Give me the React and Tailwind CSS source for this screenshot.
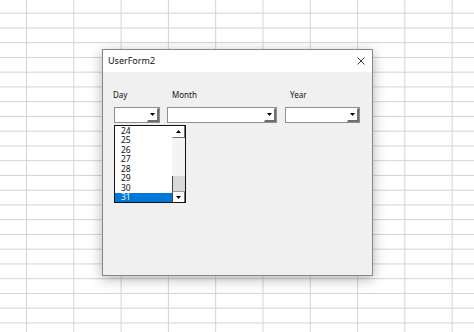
import React from 'react'

const days = [24, 25, 26, 27, 28, 29, 30, 31]

const Tri = ({ up }) => (
  <svg width="5" height="3" viewBox="0 0 5 3" className="block">
    {up ? <path d="M0 3 L2.5 0 L5 3 Z" fill="#000" /> : <path d="M0 0 L5 0 L2.5 3 Z" fill="#000" />}
  </svg>
)

const ComboBox = ({ className, children }) => (
  <div className={`relative h-[16px] flex bg-white border border-[#8f8f8f] ${className}`}>
    <div className="flex-1" />
    <div className="w-[12px] h-full flex items-center justify-center bg-white border-l border-t border-white border-r-[2px] border-b-[2px] border-r-[#6e6e6e] border-b-[#6e6e6e]">
      <Tri />
    </div>
    {children}
  </div>
)

const DayList = () => (
  <div className="absolute left-[-1px] top-[17px] w-[72px] h-[78px] flex bg-white border border-[#111] z-10">
    {/* items */}
    <div className="flex-1 flex flex-col overflow-hidden">
      {days.map((d) => (
        <div
          key={d}
          className={`h-[9.5px] shrink-0 flex items-center pl-[6px] text-[8.5px] leading-none ${
            d === 31 ? 'bg-[#0078d7] text-[#eaf3ff]' : 'text-[#111]'
          }`}
        >
          {d}
        </div>
      ))}
    </div>
    {/* scrollbar */}
    <div className="w-[13px] flex flex-col bg-[#f4f4f4]">
      <div className="h-[12px] flex items-center justify-center bg-white border-r border-b border-[#6e6e6e] border-l border-l-white">
        <Tri up />
      </div>
      <div className="flex-1 flex flex-col justify-end">
        <div className="h-[16px] bg-[#d9d9d9] border-l border-[#444] border-b border-b-[#9a9a9a]" />
      </div>
      <div className="h-[10px] flex items-center justify-center bg-white border-l border-[#444] border-r border-r-[#6e6e6e]">
        <Tri />
      </div>
    </div>
  </div>
)

export default function App() {
  return (
    <div
      className="w-[474px] h-[332px] overflow-hidden bg-white bg-[linear-gradient(to_right,#d3d3d3_1px,transparent_1px),linear-gradient(to_bottom,#d3d3d3_1px,transparent_1px)] bg-size-[47.3px_14.75px] bg-position-[26px_12.7px] pt-[49px] pl-[102px]"
      style={{ fontFamily: '"Noto Sans", "Open Sans", sans-serif' }}
    >
      <div className="w-[271px] h-[227px] flex flex-col border border-[#878787] shadow-[0_3px_12px_rgba(0,0,0,0.3)]">
        {/* title bar */}
        <div className="h-[22px] flex items-center justify-between bg-white pl-[5px] pr-[7px]">
          <span className="text-[9px] text-[#111]">UserForm2</span>
          <svg width="8" height="8" viewBox="0 0 8 8" className="block">
            <path d="M0.5 0.5 L7.5 7.5 M7.5 0.5 L0.5 7.5" stroke="#222" strokeWidth="0.9" />
          </svg>
        </div>

        {/* body */}
        <div className="flex-1 bg-[#f0f0f0] pt-[17px] pl-[10px]">
          <div className="flex items-start gap-[7px]">
            <div className="flex flex-col">
              <span className="h-[12px] leading-[12px] text-[8px] text-[#111]">Day</span>
              <ComboBox className="mt-[6px] ml-[1px] w-[46px]">
                <DayList />
              </ComboBox>
            </div>
            <div className="flex flex-col">
              <span className="h-[12px] leading-[12px] text-[8px] text-[#111] pl-[5px]">Month</span>
              <ComboBox className="mt-[6px] w-[110px]" />
            </div>
            <div className="flex flex-col ml-[1px]">
              <span className="h-[12px] leading-[12px] text-[8px] text-[#111] pl-[5px]">Year</span>
              <ComboBox className="mt-[6px] w-[75px]" />
            </div>
          </div>
        </div>
      </div>
    </div>
  )
}
